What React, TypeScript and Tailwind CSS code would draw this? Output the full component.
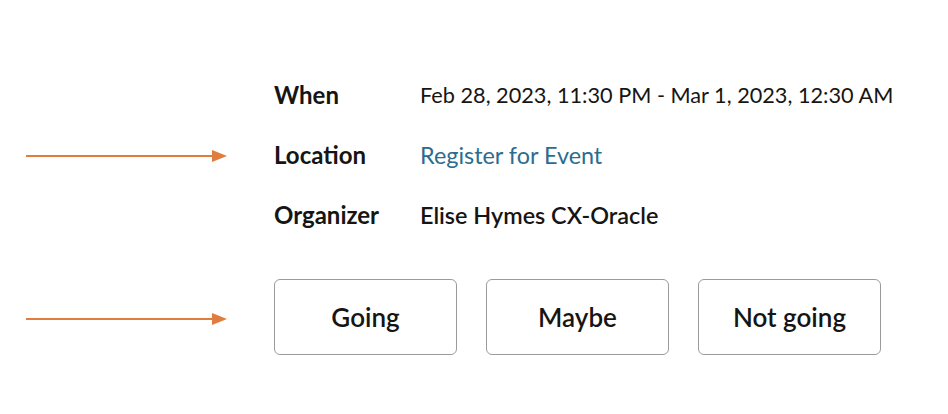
import React from "react";

function Arrow() {
  return (
    <svg width="230" height="16" viewBox="0 0 230 16" className="block">
      <line x1="26" y1="8" x2="214" y2="8" stroke="#e07c3e" strokeWidth="2" />
      <polygon points="212,2 227,8 212,14" fill="#e07c3e" />
    </svg>
  );
}

export default function App() {
  const font = { fontFamily: "Lato, 'Noto Sans', sans-serif" };
  return (
    <div className="w-[948px] h-[414px] bg-white text-[#161513] relative" style={font}>
      <div className="pt-[81px] pl-[274px]">
        <div className="grid grid-cols-[146px_1fr] gap-y-[32px] leading-[28px] items-center">
          <div className="font-bold text-[24px]">When</div>
          <div className="text-[21.7px]">Feb 28, 2023, 11:30 PM - Mar 1, 2023, 12:30 AM</div>
          <div className="font-bold text-[24px]">Location</div>
          <div className="text-[23.4px] text-[#2c6c8f]">Register for Event</div>
          <div className="font-bold text-[24px]">Organizer</div>
          <div className="font-semibold text-[23.4px]">Elise Hymes CX-Oracle</div>
        </div>
        <div className="mt-[50px] flex gap-[29px]">
          {["Going", "Maybe", "Not going"].map((t) => (
            <button
              key={t}
              className="w-[183px] h-[76px] border border-[#9b9b9b] rounded-[6px] bg-white text-[26px] font-semibold text-[#161513]"
            >
              {t}
            </button>
          ))}
        </div>
      </div>
      <div className="absolute left-0 top-[148px]"><Arrow /></div>
      <div className="absolute left-0 top-[311px]"><Arrow /></div>
    </div>
  );
}
